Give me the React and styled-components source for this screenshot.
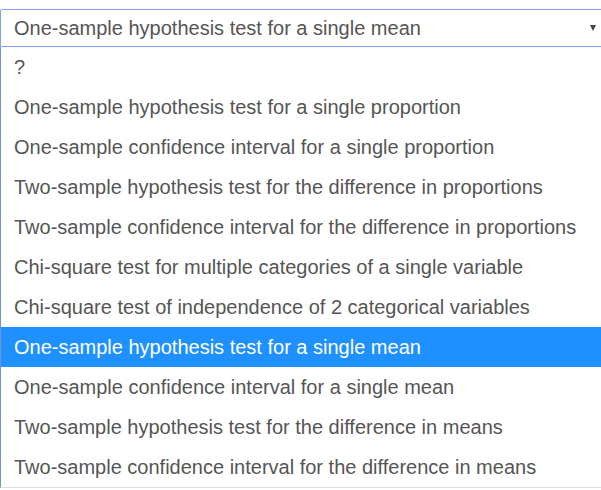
import React from 'react';
import styled, { createGlobalStyle } from 'styled-components';

const GlobalStyle = createGlobalStyle`
    html, body {
        margin: 0;
        padding: 0;
        background: #ffffff;
        overflow: hidden;
    }
`;

const options = [
    '?',
    'One-sample hypothesis test for a single proportion',
    'One-sample confidence interval for a single proportion',
    'Two-sample hypothesis test for the difference in proportions',
    'Two-sample confidence interval for the difference in proportions',
    'Chi-square test for multiple categories of a single variable',
    'Chi-square test of independence of 2 categorical variables',
    'One-sample hypothesis test for a single mean',
    'One-sample confidence interval for a single mean',
    'Two-sample hypothesis test for the difference in means',
    'Two-sample confidence interval for the difference in means',
];

const Page = styled.div`
    padding-top: 9px;
    width: 603px;
    font-family: "Liberation Sans", Arial, sans-serif;
    font-size: 20px;
    color: #555555;
`;

const SelectBox = styled.div`
    height: 36px;
    border: 1px solid #7fa3e6;
    border-radius: 2px 2px 0 0;
    display: flex;
    align-items: center;
    justify-content: space-between;
    padding: 0 0 0 13px;
    box-sizing: content-box;
`;

const Arrow = styled.span`
    width: 0;
    height: 0;
    margin-right: 6px;
    border-left: 3.5px solid transparent;
    border-right: 3.5px solid transparent;
    border-top: 6px solid #444444;
`;

const List = styled.ul`
    list-style: none;
    margin: 0;
    padding: 0;
    border-left: 1px solid #7390cf;
    border-bottom: 1px solid #dddddd;
`;

const Option = styled.li`
    height: 40px;
    display: flex;
    align-items: center;
    padding-left: 13px;
    background: ${p => (p.$active ? '#1e90ff' : '#ffffff')};
    color: ${p => (p.$active ? '#ffffff' : '#555555')};
`;

const App = () => {
    const selected = 7;
    return (
        <Page>
            <GlobalStyle />
            <SelectBox>
                <span>{options[selected]}</span>
                <Arrow />
            </SelectBox>
            <List>
                {options.map((o, i) => (
                    <Option key={o} $active={i === selected}>{o}</Option>
                ))}
            </List>
        </Page>
    );
};

export default App;
